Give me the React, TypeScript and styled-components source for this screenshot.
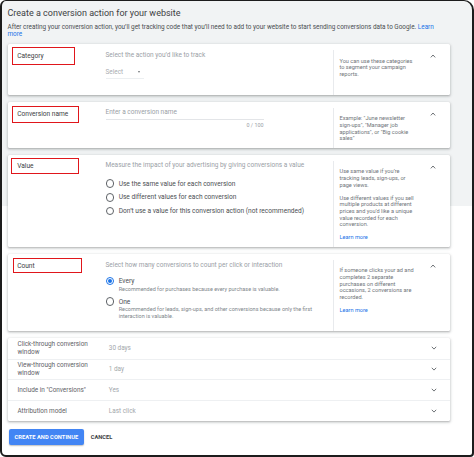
import React from 'react';
import styled, { createGlobalStyle } from 'styled-components';

const GlobalStyle = createGlobalStyle`
  html, body {
    margin: 0;
    padding: 0;
    background: #fff;
  }
  body {
    font-family: Roboto, 'Liberation Sans', Arial, sans-serif;
  }
  * {
    box-sizing: border-box;
  }
`;

const Frame = styled.div`
  width: 474px;
  height: 457px;
  border: solid #1c1c1c;
  border-width: 1.5px 2.5px 2.5px 2.5px;
  border-radius: 6px 10px 4px 6px;
  overflow: hidden;
  background: linear-gradient(to bottom, #f1f3f4 0, #f1f3f4 205px, #fff 205px);
`;

const Page = styled.div`
  display: flex;
  flex-direction: column;
  padding: 6.5px 22.5px 0 5.5px;
`;

const Title = styled.h1`
  margin: 0;
  font-size: 9px;
  line-height: 10px;
  font-weight: 400;
  color: #3c4043;
`;

const Intro = styled.p`
  margin: 6px 0 0;
  font-size: 6.4px;
  line-height: 7.3px;
  color: #4a4e52;
  white-space: nowrap;
`;

const Link = styled.a`
  color: #1a73e8;
  text-decoration: none;
`;

const Cards = styled.div`
  display: flex;
  flex-direction: column;
  gap: 7px;
  margin-top: 6.3px;
`;

const Card = styled.section<{ $minHeight: number }>`
  display: grid;
  grid-template-columns: 98px 227px 84px 32px;
  min-height: ${({ $minHeight }) => $minHeight}px;
  background: #fff;
  border-radius: 1.5px;
  box-shadow: 0 1px 2px rgba(60, 64, 67, 0.3), 0 1px 3px 1px rgba(60, 64, 67, 0.12);
`;

const LabelCell = styled.div`
  display: flex;
  align-items: flex-start;
`;

const RedBox = styled.div<{ $x: number; $y: number; $w: number; $h: number }>`
  display: flex;
  align-items: center;
  margin: ${({ $y }) => $y}px 0 0 ${({ $x }) => $x}px;
  width: ${({ $w }) => $w}px;
  height: ${({ $h }) => $h}px;
  padding-left: ${({ $x }) => 10 - $x - 1.3}px;
  border: 1.3px solid #e0161b;
  font-size: 6.6px;
  color: #3c4043;
`;

const Middle = styled.div`
  display: flex;
  flex-direction: column;
  padding-top: 6.5px;
`;

const Prompt = styled.div`
  font-size: 6.5px;
  line-height: 8px;
  color: #9aa0a6;
`;

const SelectBox = styled.div`
  display: flex;
  align-items: center;
  justify-content: space-between;
  width: 38px;
  height: 14px;
  margin-top: 6.5px;
  padding: 0 4px 0 0;
  border-bottom: 1px solid #eceff1;
  font-size: 6.4px;
  color: #a9adb1;
`;

const Caret = styled.span`
  width: 0;
  height: 0;
  border-left: 1.8px solid transparent;
  border-right: 1.8px solid transparent;
  border-top: 2.2px solid #6f7377;
`;

const InputLine = styled.div`
  width: 158px;
  height: 11.2px;
  border-bottom: 1px solid #e3e5e8;
  font-size: 6.5px;
  line-height: 8px;
  color: #9aa0a6;
`;

const Counter = styled.div`
  width: 158px;
  margin-top: 2px;
  text-align: right;
  font-size: 5.4px;
  line-height: 6px;
  color: #9aa0a6;
`;

const RadioList = styled.div<{ $top: number }>`
  display: flex;
  flex-direction: column;
  margin-top: ${({ $top }) => $top}px;
`;

const RadioRow = styled.div`
  display: flex;
  align-items: center;
  height: 13.7px;
  gap: 4.6px;
  font-size: 6.6px;
  color: #4a4e52;
`;

const OptionRow = styled.div<{ $gap: number }>`
  display: grid;
  grid-template-columns: 8.6px 1fr;
  column-gap: 4.6px;
  margin-top: ${({ $gap }) => $gap}px;
`;

const RadioDot = styled.span<{ $checked?: boolean }>`
  position: relative;
  display: inline-block;
  flex: none;
  width: 8.6px;
  height: 8.6px;
  border-radius: 50%;
  border: 1px solid ${({ $checked }) => ($checked ? '#1a73e8' : '#5f6368')};

  &::after {
    content: '';
    display: ${({ $checked }) => ($checked ? 'block' : 'none')};
    position: absolute;
    left: 1.3px;
    top: 1.3px;
    width: 4px;
    height: 4px;
    border-radius: 50%;
    background: #1a73e8;
  }
`;

const OptionTitle = styled.div`
  display: flex;
  align-items: center;
  height: 8px;
  font-size: 6.6px;
  color: #4a4e52;
`;

const OptionNote = styled.div`
  grid-column: 2;
  margin-top: 0.8px;
  font-size: 5.5px;
  line-height: 6.6px;
  color: #80868b;
`;

const Help = styled.aside`
  margin-top: 6px;
  padding: 7.3px 2px 0 6px;
  border-left: 1px solid #e8eaed;
  font-size: 5.6px;
  line-height: 6.65px;
  color: #70757a;
  white-space: nowrap;

  p {
    margin: 0 0 6.4px;
  }
`;

const ChevronCell = styled.div<{ $align?: 'start' | 'center' }>`
  display: flex;
  justify-content: center;
  align-items: ${({ $align }) => ($align === 'center' ? 'center' : 'flex-start')};
  padding-top: ${({ $align }) => ($align === 'center' ? 0 : 9.7)}px;
`;

const SettingsCard = styled.section`
  display: flex;
  flex-direction: column;
  background: #fff;
  border-radius: 1.5px;
  box-shadow: 0 1px 2px rgba(60, 64, 67, 0.3), 0 1px 3px 1px rgba(60, 64, 67, 0.12);
`;

const SettingRow = styled.div`
  display: grid;
  grid-template-columns: 101.3px 1fr 32px;
  height: 20.7px;
  align-items: center;

  & + & {
    border-top: 1px solid #eef0f2;
  }
`;

const SettingName = styled.div`
  padding-left: 10px;
  font-size: 6.4px;
  line-height: 8px;
  color: #5f6368;
`;

const SettingValue = styled.div`
  font-size: 6.4px;
  color: #a3a7ab;
`;

const Actions = styled.div`
  display: flex;
  align-items: center;
  gap: 7px;
  margin-top: 8.3px;
  padding-left: 1.5px;
`;

const PrimaryButton = styled.button`
  width: 74.7px;
  height: 16px;
  padding: 0;
  border: none;
  border-radius: 2px;
  background: #4285f4;
  color: #fff;
  font-family: inherit;
  font-size: 5.7px;
  font-weight: 700;
  letter-spacing: 0.05px;
  box-shadow: 0 1px 1.5px rgba(0, 0, 0, 0.25);
`;

const TextButton = styled.button`
  padding: 0;
  border: none;
  background: none;
  color: #3c4043;
  font-family: inherit;
  font-size: 5.7px;
  font-weight: 700;
`;

const Chevron = ({ up }: { up?: boolean }) => (
  <svg width="6" height="4" viewBox="0 0 6 4">
    <path
      d={up ? 'M0.8 3.4 L3 1 L5.2 3.4' : 'M0.8 0.8 L3 3.1 L5.2 0.8'}
      fill="none"
      stroke="#5f6368"
      strokeWidth="0.9"
    />
  </svg>
);

const settings = [
  { name: ['Click-through conversion', 'window'], value: '30 days' },
  { name: ['View-through conversion', 'window'], value: '1 day' },
  { name: ['Include in "Conversions"'], value: 'Yes' },
  { name: ['Attribution model'], value: 'Last click' },
];

const App: React.FC = () => {
  return (
    <>
      <GlobalStyle />
      <Frame>
        <Page>
          <Title>Create a conversion action for your website</Title>
          <Intro>
            After creating your conversion action, you’ll get tracking code that you’ll need to add to your
            website to start sending conversions data to Google. <Link href="#">Learn<br />more</Link>
          </Intro>

          <Cards>
            <Card $minHeight={50.5}>
              <LabelCell>
                <RedBox $x={4.7} $y={2.7} $w={63} $h={18}>Category</RedBox>
              </LabelCell>
              <Middle>
                <Prompt>Select the action you’d like to track</Prompt>
                <SelectBox>
                  Select
                  <Caret />
                </SelectBox>
              </Middle>
              <Help>
                You can use these categories
                <br />
                to segment your campaign
                <br />
                reports.
              </Help>
              <ChevronCell>
                <Chevron up />
              </ChevronCell>
            </Card>

            <Card $minHeight={46}>
              <LabelCell>
                <RedBox $x={4} $y={4.4} $w={67.3} $h={16.3}>Conversion name</RedBox>
              </LabelCell>
              <Middle>
                <InputLine>Enter a conversion name</InputLine>
                <Counter>0 / 100</Counter>
              </Middle>
              <Help>
                Example: "June newsletter
                <br />
                sign-ups", "Manager job
                <br />
                applications", or "Big cookie
                <br />
                sales"
              </Help>
              <ChevronCell>
                <Chevron up />
              </ChevronCell>
            </Card>

            <Card $minHeight={92.3}>
              <LabelCell>
                <RedBox $x={3} $y={3.3} $w={68.3} $h={15.7}>Value</RedBox>
              </LabelCell>
              <Middle>
                <Prompt>Measure the impact of your advertising by giving conversions a value</Prompt>
                <RadioList $top={7.5}>
                  <RadioRow>
                    <RadioDot />
                    Use the same value for each conversion
                  </RadioRow>
                  <RadioRow>
                    <RadioDot />
                    Use different values for each conversion
                  </RadioRow>
                  <RadioRow>
                    <RadioDot />
                    Don’t use a value for this conversion action (not recommended)
                  </RadioRow>
                </RadioList>
              </Middle>
              <Help>
                <p>
                  Use same value if you’re
                  <br />
                  tracking leads, sign-ups, or
                  <br />
                  page views.
                </p>
                <p>
                  Use different values if you sell
                  <br />
                  multiple products at different
                  <br />
                  prices and you’d like a unique
                  <br />
                  value recorded for each
                  <br />
                  conversion.
                </p>
                <Link href="#">Learn more</Link>
              </Help>
              <ChevronCell>
                <Chevron up />
              </ChevronCell>
            </Card>

            <Card $minHeight={76.7}>
              <LabelCell>
                <RedBox $x={5.3} $y={4} $w={69.3} $h={15}>Count</RedBox>
              </LabelCell>
              <Middle>
                <Prompt>Select how many conversions to count per click or interaction</Prompt>
                <OptionRow $gap={8.2}>
                  <OptionTitle>
                    <RadioDot $checked />
                  </OptionTitle>
                  <OptionTitle>Every</OptionTitle>
                  <OptionNote>Recommended for purchases because every purchase is valuable.</OptionNote>
                </OptionRow>
                <OptionRow $gap={5.4}>
                  <OptionTitle>
                    <RadioDot />
                  </OptionTitle>
                  <OptionTitle>One</OptionTitle>
                  <OptionNote>
                    Recommended for leads, sign-ups, and other conversions because only the first
                    <br />
                    interaction is valuable.
                  </OptionNote>
                </OptionRow>
              </Middle>
              <Help>
                <p>
                  If someone clicks your ad and
                  <br />
                  completes 2 separate
                  <br />
                  purchases on different
                  <br />
                  occasions, 2 conversions are
                  <br />
                  recorded.
                </p>
                <Link href="#">Learn more</Link>
              </Help>
              <ChevronCell>
                <Chevron up />
              </ChevronCell>
            </Card>

            <SettingsCard>
              {settings.map((s) => (
                <SettingRow key={s.value}>
                  <SettingName>
                    {s.name.map((line, i) => (
                      <React.Fragment key={line}>
                        {i > 0 && <br />}
                        {line}
                      </React.Fragment>
                    ))}
                  </SettingName>
                  <SettingValue>{s.value}</SettingValue>
                  <ChevronCell $align="center">
                    <Chevron />
                  </ChevronCell>
                </SettingRow>
              ))}
            </SettingsCard>
          </Cards>

          <Actions>
            <PrimaryButton>CREATE AND CONTINUE</PrimaryButton>
            <TextButton>CANCEL</TextButton>
          </Actions>
        </Page>
      </Frame>
    </>
  );
};

export default App;
